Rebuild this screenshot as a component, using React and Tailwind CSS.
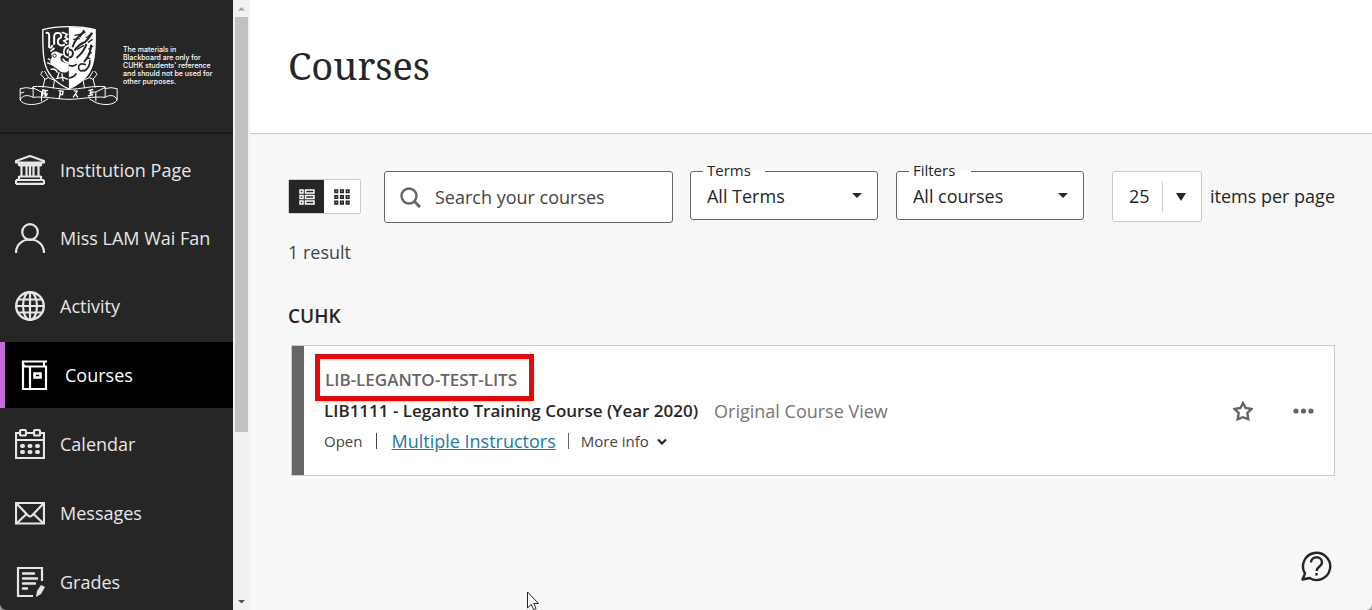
import { useState } from "react";
import clsx from "clsx";

const navItems = [
  { id: "institution", name: "Institution Page", icon: InstitutionIcon },
  { id: "profile", name: "Miss LAM Wai Fan", icon: ProfileIcon },
  { id: "activity", name: "Activity", icon: GlobeIcon },
  { id: "courses", name: "Courses", icon: CoursesIcon },
  { id: "calendar", name: "Calendar", icon: CalendarIcon },
  { id: "messages", name: "Messages", icon: MessagesIcon },
  { id: "grades", name: "Grades", icon: GradesIcon },
];

function Icon({ children }) {
  return (
    <svg
      className="size-[30px] shrink-0"
      viewBox="0 0 30 30"
      fill="none"
      stroke="currentColor"
      strokeWidth="2.200"
      aria-hidden="true"
    >
      {children}
    </svg>
  );
}

function InstitutionIcon() {
  return (
    <Icon>
      <path d="M1 7.500V6L15 1l14 5v1.500z" strokeLinejoin="round" />
      <path d="M3 8.500h24M4 10.500h22M4 21.500h22M1 28.800h28M1 25v4M29 25v4M1 25h28" />
      <path d="M4 21v4M26 21v4M4 7v4M26 7v4" />
      <path d="M6.500 11v10M11.500 11v10M15 11v10M18.500 11v10M23.500 11v10" />
    </Icon>
  );
}

function ProfileIcon() {
  return (
    <Icon>
      <circle cx="15" cy="9" r="7.800" />
      <path d="M1 30c0-8 6-13.500 14-13.500S29 22 29 30" />
    </Icon>
  );
}

function GlobeIcon() {
  return (
    <Icon>
      <circle cx="15" cy="15" r="13.800" strokeWidth="2.400" />
      <ellipse cx="15" cy="15" rx="7" ry="14" />
      <path d="M15 1v28M1 15h28M3.500 8.500h23M3.500 21.500h23" />
    </Icon>
  );
}

function CoursesIcon() {
  return (
    <Icon>
      <path d="M3 6v23h23V6.500H6A3 3 0 0 1 3 4V1.500h24M24 2v4M10 7v22" />
      <path d="M14.500 13.500h6v4h-6z" strokeWidth="2.600" />
      <path d="M3 1v5" />
    </Icon>
  );
}

function CalendarIcon() {
  return (
    <Icon>
      <path d="M5 4H1v25h28V4h-4M11 4h8M1 11h28" />
      <rect x="5" y="1" width="6" height="5.500" rx="1.500" />
      <rect x="19" y="1" width="6" height="5.500" rx="1.500" />
      <path
        d="M7 17h1M14.500 17h1M22 17h1M7 23h1M14.500 23h1M22 23h1"
        strokeWidth="4"
        strokeLinecap="round"
      />
    </Icon>
  );
}

function MessagesIcon() {
  return (
    <Icon>
      <path d="M1 5h28v20.500H1z" />
      <path d="M2 6l11 11.500q2 1.800 4 0L28 6M2 25l9.500-9M28 25l-9.500-9" />
    </Icon>
  );
}

function GradesIcon() {
  return (
    <Icon>
      <path d="M27 14V1H3v28h15" />
      <path d="M8 6.500h11M8 11.500h14M8 16.500h12M8 21.500h4" strokeLinecap="round" strokeWidth="2.400" />
      <path d="M21 30l1-6 4-6 4 2-4 7z" fill="currentColor" stroke="none" />
    </Icon>
  );
}

function CrestLogo() {
  return (
    <svg
      className="h-[80px] w-[99px] shrink-0"
      viewBox="56 48 296 240"
      fill="none"
      stroke="#fff"
      strokeWidth="3"
      role="img"
      aria-label="CUHK crest"
    >
      {/* shield */}
      <path d="M127 59c24-7 52-9 78-9s54 2 79 9c0 40 2 76-9 108-10 32-35 54-70 70-35-16-60-38-70-70-10-32-8-68-8-108z" strokeWidth="4" />
      <path d="M205 51c27 0 54 2 79 8 0 40 2 76-9 108-10 32-35 54-70 70z" fill="#fff" stroke="none" />
      {/* bird on the left half */}
      <path d="M136 69q10-4 10 8v34q8 6 9-6M161 104V80q0-12 12-11t8 14q-12 4-8 18 8 10 20 2" strokeWidth="6" />
      <path d="M184 67l16 6-6 8 8 6-12 6 10 8M150 124l12-10" strokeWidth="5" />
      <path d="M152 132c4-10 18-10 26-2l12 2-10 8c-2 14 8 18 25 20v22c-12 10-24 6-34-4-10-8-18-12-22-22 2-10 8-12 3-24z" fill="#fff" stroke="none" />
      <circle cx="162" cy="137" r="5" stroke="#262626" />
      <path d="M140 158l20 8M150 178q16-4 20 10M176 186l-6 20M184 190l4 24M166 206l22-4 14 6M150 150l-8-4" strokeWidth="4" />
      <path d="M206 106q-16 4-16 20 0 16 15 16M205 118q-8 4-2 12M187 146q6 12 18 12" strokeWidth="5" />
      {/* feathers on the right half */}
      <g stroke="#262626" strokeWidth="6">
        <path d="M205 118q14 2 12 14t-12 10M216 112q8-30 38-48M222 122q14-20 32-26 14-12 20-28M228 144q22-18 30-42M250 156q20-18 22-52" />
        <path d="M250 60l-12 22M246 72l-24 4M238 86l-20 2M256 84l20-14M262 98l14-10M250 106l-20 12M264 118l14-10M262 132l12-4M256 144l14 2" strokeWidth="4" />
        <path d="M256 164q-22-8-22 10 4 14 16 6M250 184q20-12 18-34M205 166q14 6 24-4M205 204q18-2 22-14" strokeWidth="5" />
      </g>
      {/* ribbon */}
      <path d="M126 183l-5 10 12 14-6 26M132 183l12 20 18 8-4 24M144 203l-11 5M282 183l8 10-12 14 6 26M278 183l-12 20-18 8 4 24M266 203l12 5" />
      <path d="M98 230c36-4 70 8 106 8s72-12 110-8v32c-36-4-72 6-108 6s-74-10-108-6z" />
      <path d="M98 236q-22-6-39 0v34c8 14 36 18 64 8l20-12M59 270c6-16 24-16 39-8M59 250l12-4M312 236q20-6 38 0v34c-8 14-36 18-64 8l-20-12M350 270c-6-16-22-16-38-8M95 232l28 14v28M314 232l-28 14v28M122 246h16M286 246h-16" />
      <path d="M124 240l18 2M126 250l14 2-4 8M126 242v16M134 242v18M174 242l14 2-2 10-10-2M180 244l-4 22M220 242l10 2-12 18M224 250l8 12M264 242l14-4M266 250l12-2M270 240l2 18M262 258l16-4" strokeWidth="4" />
    </svg>
  );
}

function FieldSelect({ id, label, options }) {
  return (
    <fieldset className="relative h-[59px] w-[188px] shrink-0 rounded-[3px] border border-[#666] bg-white">
      <legend className="ml-3 h-5 w-[62px] pl-1 text-[15px] leading-[18px]">
        <label htmlFor={id}>{label}</label>
      </legend>
      <select
        id={id}
        className="block h-[30px] w-full appearance-none bg-transparent pr-10 pl-4 text-[18px] outline-none"
      >
        {options.map((option) => (
          <option key={option}>{option}</option>
        ))}
      </select>
      <svg
        className="pointer-events-none absolute top-3 right-[15px] h-[5px] w-[10px]"
        viewBox="0 0 10 5"
        aria-hidden="true"
      >
        <path d="M0 0h10L5 5z" fill="#262626" />
      </svg>
    </fieldset>
  );
}

function Sidebar({ active, onSelect }) {
  return (
    <aside className="w-[233px] shrink-0 overflow-hidden bg-[#262626] text-[#e6e6e6]">
      <div className="flex h-[134px] items-center gap-[5px] border-b-2 border-[#1c1a1a] pl-[19px]">
        <CrestLogo />
        <p className="w-[92px] font-['Inter',sans-serif] text-[7px] leading-2 font-medium text-white">
          The materials in Blackboard are only for CUHK students' reference and
          should not be used for other purposes.
        </p>
      </div>
      <nav className="flex flex-col gap-[3px] pt-[3px]">
        {navItems.map((item) => (
          <a
            key={item.id}
            href={`#${item.id}`}
            onClick={() => onSelect(item.id)}
            className={clsx(
              "flex shrink-0 items-center gap-[15px] pl-[15px] text-[18px]",
              item.id === "profile" ? "h-16" : "h-[66px]",
              item.id === active &&
                "border-l-5 border-[#c56dd6] bg-black text-white",
            )}
          >
            <item.icon />
            {item.name}
          </a>
        ))}
      </nav>
    </aside>
  );
}

function ScrollTrack() {
  return (
    <div className="flex w-[17px] shrink-0 flex-col items-center bg-[#f1f1f1]" aria-hidden="true">
      <svg className="h-[17px] w-[17px] shrink-0" viewBox="0 0 17 17">
        <path d="M5 10.500h7L8.500 7z" fill="#a3a3a3" />
      </svg>
      <div className="h-[415px] w-[13px] bg-[#c1c1c1]" />
      <svg className="mt-auto h-[17px] w-[17px] shrink-0" viewBox="0 0 17 17">
        <path d="M5 7h7l-3.500 3.500z" fill="#505050" />
      </svg>
    </div>
  );
}

function CourseCard() {
  return (
    <article className="ml-[3px] flex border border-[#ccc] bg-white">
      <div className="w-3 shrink-0 bg-[#666]" />
      <div className="flex-1 pt-2 pb-5 pl-5">
        <div className="-ml-[9px] flex h-[47px] w-[219px] items-center border-5 border-[#ea0606] pt-1 pl-[5px] text-[17px] font-semibold text-[#666]">
          LIB-LEGANTO-TEST-LITS
        </div>
        <div className="flex h-5 items-center gap-4">
          <h3 className="text-[17px] font-semibold">
            LIB1111 - Leganto Training Course (Year 2020)
          </h3>
          <span className="text-[18px] text-[#767676]">Original Course View</span>
        </div>
        <div className="mt-[6px] flex h-7 items-center text-[15px] text-[#444]">
          <span>Open</span>
          <span className="mx-[14px] h-4 w-px bg-[#444]" />
          <a href="#instructors" className="text-[18px] text-[#217aa8] underline">
            Multiple Instructors
          </a>
          <span className="mx-3 h-4 w-px bg-[#666]" />
          <button className="flex items-center gap-2">
            More info
            <svg className="h-[7px] w-[10px]" viewBox="0 0 10 7" fill="none" aria-hidden="true">
              <path d="M1 1.500l4 4 4-4" stroke="#262626" strokeWidth="2.200" />
            </svg>
          </button>
        </div>
      </div>
      <div className="flex items-center gap-10 pr-5">
        <button aria-label="Add to favorites">
          <svg className="size-5" viewBox="0 0 20 20" fill="none" aria-hidden="true">
            <path
              d="M10 2l2.500 5 6 1-4.200 4 1 6.200L10 16.200l-5.300 2 1-6.200L1.500 8l6-1z"
              stroke="#666"
              strokeWidth="2.400"
            />
          </svg>
        </button>
        <button aria-label="More options">
          <svg className="h-[6px] w-[21px]" viewBox="0 0 21 6" fill="#666" aria-hidden="true">
            <circle cx="3" cy="3" r="2.600" />
            <circle cx="10.500" cy="3" r="2.600" />
            <circle cx="18" cy="3" r="2.600" />
          </svg>
        </button>
      </div>
    </article>
  );
}

function App() {
  const [active, setActive] = useState("courses");
  const [view, setView] = useState("list");
  const [query, setQuery] = useState("");

  return (
    <div className="bg-[#999] font-['Open_Sans','Noto_Sans',sans-serif] text-[#262626]">
      <div className="relative flex h-screen overflow-hidden rounded-b-md bg-[#f8f8f8]">
        <Sidebar active={active} onSelect={setActive} />
        <ScrollTrack />

        <main className="min-w-0 flex-1">
          <header className="flex h-[134px] items-center border-b border-[#ccc] bg-white pb-[2px] pl-[38px]">
            <h1 className="font-['Noto_Serif','Droid_Serif','DejaVu_Serif',serif] text-[38px]">
              Courses
            </h1>
          </header>

          <div className="pt-[27px] pr-[37px] pl-[38px]">
            {/* Toolbar */}
            <div className="flex items-start">
              <div className="mt-[18px] flex rounded-[2px] border border-[#ccc] bg-white">
                <button
                  aria-label="List view"
                  onClick={() => setView("list")}
                  className={clsx(
                    "flex h-[33px] w-[35px] items-center justify-center",
                    view === "list" && "bg-[#262626] text-white",
                  )}
                >
                  <svg className="size-4" viewBox="0 0 16 16" fill="none" stroke="currentColor" strokeWidth="1.500" aria-hidden="true">
                    <path d="M1 1h3v3H1zM1 6.500h3v3H1zM1 12h3v3H1zM6.500 1H15v3H6.500zM6.500 6.500H15v3H6.500zM6.500 12H15v3H6.500z" />
                  </svg>
                </button>
                <button
                  aria-label="Grid view"
                  onClick={() => setView("grid")}
                  className={clsx(
                    "flex h-[33px] w-9 items-center justify-center",
                    view === "grid" && "bg-[#262626] text-white",
                  )}
                >
                  <svg className="size-4" viewBox="0 0 16 16" fill="none" stroke="currentColor" strokeWidth="1.600" aria-hidden="true">
                    <path d="M1 1h2.500v2.500H1zM6.700 1h2.500v2.500H6.700zM12.400 1h2.500v2.500h-2.500zM1 6.700h2.500v2.500H1zM6.700 6.700h2.500v2.500H6.700zM12.400 6.700h2.500v2.500h-2.500zM1 12.400h2.500v2.500H1zM6.700 12.400h2.500v2.500H6.700zM12.400 12.400h2.500v2.500h-2.500z" />
                  </svg>
                </button>
              </div>

              <div className="mt-[10px] ml-[23px] flex h-[52px] min-w-0 flex-1 items-center rounded-[3px] border border-[#666] bg-white pl-[15px]">
                <svg className="size-[21px] shrink-0" viewBox="0 0 21 21" fill="none" stroke="#666" aria-hidden="true">
                  <circle cx="9" cy="9" r="7.500" strokeWidth="2.400" />
                  <path d="M14 14l6 6" strokeWidth="3" />
                </svg>
                <input
                  type="text"
                  aria-label="Search your courses"
                  placeholder="Search your courses"
                  value={query}
                  onChange={(e) => setQuery(e.target.value)}
                  className="ml-[14px] w-full min-w-0 text-[18px] outline-none placeholder:text-[#444]"
                />
              </div>

              <div className="ml-[17px] flex gap-[18px]">
                <FieldSelect id="terms" label="Terms" options={["All Terms"]} />
                <FieldSelect id="filters" label="Filters" options={["All courses"]} />
              </div>

              <div className="mt-[10px] ml-7 flex h-[51px] items-center gap-2">
                <div className="relative">
                  <select
                    id="page-size"
                    className="block h-[51px] w-[90px] appearance-none rounded-[3px] border border-[#ccc] bg-white pl-4 text-[18px] outline-none"
                  >
                    <option>25</option>
                    <option>50</option>
                    <option>100</option>
                  </select>
                  <div className="pointer-events-none absolute inset-y-[10px] right-[15px] flex items-center border-l border-[#ccc] pl-3">
                    <svg className="h-[8px] w-[12px]" viewBox="0 0 12 8" aria-hidden="true">
                      <path d="M1 0h10L6 8z" fill="#262626" />
                    </svg>
                  </div>
                </div>
                <label htmlFor="page-size" className="text-[18px] whitespace-nowrap">
                  items per page
                </label>
              </div>
            </div>

            <p className="mt-[15px] text-[18px] leading-7 text-[#444]">1 result</p>

            <h2 className="mt-9 mb-[15px] text-[19px] leading-7 font-semibold">CUHK</h2>
            <CourseCard />
          </div>
        </main>

        <button aria-label="Help" className="absolute right-10 bottom-7">
          <svg className="size-8" viewBox="0 0 32 32" fill="none" stroke="#262626" strokeWidth="2.400" aria-hidden="true">
            <path d="M5 23.500A13.600 13.600 0 1 1 9.500 28L2.500 29.500z" strokeLinejoin="round" />
            <path d="M11 12.500c0-7 11-7 11 0 0 4-5 4-5.500 8.500" />
            <path d="M16.500 23v2.500" />
          </svg>
        </button>

        {/* Mouse pointer */}
        <svg
          className="pointer-events-none absolute bottom-0 left-[527px] h-[19px] w-3"
          viewBox="0 0 12 19"
          aria-hidden="true"
        >
          <path d="M.5 1v16l3.700-3.500 2.400 5.200 2.500-1.200-2.300-5H11.500z" fill="#fff" stroke="#223" />
        </svg>
      </div>
    </div>
  );
}

export default App;
